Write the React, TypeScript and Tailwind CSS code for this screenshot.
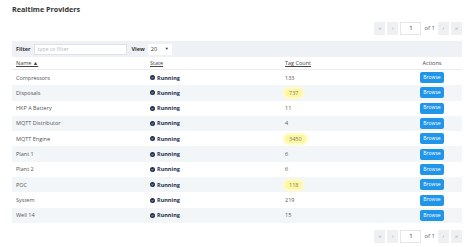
import React from 'react';

const rows = [
  { name: 'Compressors', count: '133', hot: false },
  { name: 'Disposals', count: '737', hot: true },
  { name: 'HKP A Battery', count: '11', hot: false },
  { name: 'MQTT Distributor', count: '4', hot: false },
  { name: 'MQTT Engine', count: '3450', hot: true },
  { name: 'Plant 1', count: '6', hot: false },
  { name: 'Plant 2', count: '6', hot: false },
  { name: 'POC', count: '118', hot: true },
  { name: 'System', count: '219', hot: false },
  { name: 'Well 14', count: '15', hot: false },
];

const Pager = () => (
  <div className="flex justify-end items-center gap-[2px] text-[6px] text-[#9aa3ad]">
    <span className="w-[11px] h-[13px] bg-[#eef0f2] flex items-center justify-center">«</span>
    <span className="w-[11px] h-[13px] bg-[#eef0f2] flex items-center justify-center">‹</span>
    <span className="w-[21px] h-[13px] bg-white border border-[#e3e6ea] flex items-center justify-center text-[#333]">1</span>
    <span className="px-[1px] text-[#666]">of 1</span>
    <span className="w-[11px] h-[13px] bg-[#eef0f2] flex items-center justify-center">›</span>
    <span className="w-[11px] h-[13px] bg-[#eef0f2] flex items-center justify-center">»</span>
  </div>
);

const App = () => {
  return (
    <div className="w-[474px] h-[247px] bg-white px-3 pt-[4px] font-['Open_Sans',sans-serif] text-[#555]">
      <h1 className="text-[7.2px] font-bold text-[#333] leading-[10px]">Realtime Providers</h1>

      <div className="mt-[8px]">
        <Pager />
      </div>

      <div className="mt-[6px]">
        <div className="bg-[#eef2f6] h-[16px] flex items-center px-[4px] text-[5.5px]">
          <span className="font-bold text-[#333] mr-[3px]">Filter</span>
          <div className="w-[93px] h-[11px] bg-white border border-[#dde2e8] flex items-center px-[3px] text-[#b5bcc4]">
            type to filter
          </div>
          <span className="font-bold text-[#333] ml-[5px] mr-[3px]">View</span>
          <div className="w-[24px] h-[11px] bg-white flex items-center justify-between px-[3px] text-[#333]">
            <span>20</span>
            <span className="text-[4px]">▼</span>
          </div>
        </div>

        <div className="grid grid-cols-[134px_135px_1fr_60px] h-[13px] items-center text-[5.5px] text-[#444] border-b border-[#e8ecf0]">
          <span className="pl-[4px] underline">Name ▲</span>
          <span className="pl-[4px] underline">State</span>
          <span className="pl-[4px] underline">Tag Count</span>
          <span className="text-center">Actions</span>
        </div>

        {rows.map((r, i) => (
          <div
            key={r.name}
            className={`grid grid-cols-[134px_135px_1fr_60px] h-[15.3px] items-center text-[5.5px] ${
              i % 2 === 1 ? 'bg-[#f3f6f9]' : 'bg-white'
            }`}
          >
            <span className="pl-[4px] text-[#555]">{r.name}</span>
            <span className="pl-[4px] flex items-center gap-[2px] font-bold text-[#1f2f4d]">
              <svg width="5" height="5" viewBox="0 0 10 10">
                <circle cx="5" cy="5" r="5" fill="#1f2f4d" />
                <path d="M3 5.2 L4.5 6.6 L7 3.6" stroke="#fff" strokeWidth="1.2" fill="none" />
              </svg>
              Running
            </span>
            <span className="pl-[4px]">
              {r.hot ? (
                <span className="inline-block px-[4px] rounded-full bg-[#fff7a0] shadow-[0_0_3px_2px_#fffac0] text-[#777]">
                  {r.count}
                </span>
              ) : (
                <span className="text-[#555]">{r.count}</span>
              )}
            </span>
            <div className="flex justify-center">
              <button className="w-[24px] h-[11px] rounded-[2px] bg-[#2196e8] text-white text-[5px] flex items-center justify-center">
                Browse
              </button>
            </div>
          </div>
        ))}
      </div>

      <div className="mt-[7px]">
        <Pager />
      </div>
    </div>
  );
};

export default App;
